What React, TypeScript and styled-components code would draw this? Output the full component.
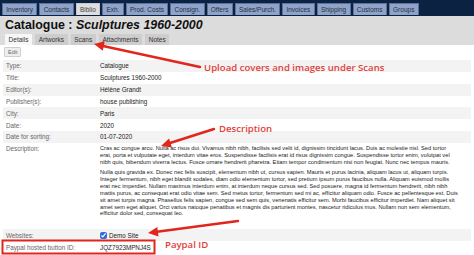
import React from "react";
import styled, { createGlobalStyle } from "styled-components";

const GlobalStyle = createGlobalStyle`
  html, body { margin: 0; padding: 0; background: #ffffff; }
  body { font-family: "Liberation Sans", Arial, Helvetica, sans-serif; }
  * { box-sizing: border-box; }
`;

const Page = styled.div`
  position: relative;
  width: 474px;
  height: 255px;
  overflow: hidden;
  background: #ffffff;
`;

const NavBar = styled.nav`
  display: flex;
  gap: 2px;
  height: 16px;
  padding: 3px 0 1px 2px;
  background: #0b2243;
`;

const NavTab = styled.div<{ $active?: boolean }>`
  display: flex;
  align-items: center;
  padding: 0 3.3px;
  font-size: 6.5px;
  color: ${(p) => (p.$active ? "#444" : "#2a2f3c")};
  background: ${(p) => (p.$active ? "#dedede" : "#8ea3ca")};
  border: 1px solid ${(p) => (p.$active ? "#c8c8c8" : "#5d719a")};
  border-bottom: none;
  white-space: nowrap;
`;

const Header = styled.header`
  display: flex;
  flex-direction: column;
  height: 29px;
  background: #dcdcdc;
  padding: 2px 0 0 5px;
`;

const Title = styled.h1`
  margin: 0;
  font-size: 12.4px;
  line-height: 14px;
  font-weight: bold;
  color: #111;
  em { font-style: italic; }
`;

const SubTabs = styled.div`
  display: flex;
  gap: 3px;
  margin-top: auto;
`;

const SubTab = styled.div<{ $active?: boolean }>`
  height: 11px;
  display: flex;
  align-items: center;
  padding: 0 3.6px;
  font-size: 6.5px;
  color: #333;
  background: ${(p) => (p.$active ? "#f7f7f7" : "#cdcdcd")};
`;

const Content = styled.main`
  padding: 2px 3px 0 3px;
`;

const EditButton = styled.button`
  display: block;
  height: 10px;
  margin: 0 0 0 1px;
  padding: 0 3px;
  font-family: inherit;
  font-size: 5.5px;
  color: #666;
  background: #efefef;
  border: 1px solid #cfcfcf;
  border-radius: 1px;
`;

const Table = styled.div`
  margin-top: 3px;
  display: flex;
  flex-direction: column;
`;

const Row = styled.div<{ $striped?: boolean; $tall?: boolean }>`
  display: grid;
  grid-template-columns: 97px 1fr;
  min-height: 11.85px;
  align-items: ${(p) => (p.$tall ? "start" : "center")};
  background: ${(p) => (p.$striped ? "#f3f3f3" : "#ffffff")};
  padding: ${(p) => (p.$tall ? "2px 0 12px 0" : "0")};
`;

const Label = styled.div`
  padding-left: 3px;
  font-size: 6.3px;
  color: #666;
  white-space: nowrap;
`;

const Value = styled.div`
  font-size: 6.3px;
  color: #222;
  display: flex;
  align-items: center;
  gap: 2px;
  white-space: nowrap;
`;

const Desc = styled.div`
  display: flex;
  flex-direction: column;
  gap: 3px;
`;

const Para = styled.p`
  margin: 0;
  font-size: 5.7px;
  line-height: 6.95px;
  color: #222;
  white-space: nowrap;
`;

const Check = styled.input`
  width: 7px;
  height: 7px;
  margin: 0;
  accent-color: #2c6fdc;
`;

const Overlay = styled.svg`
  position: absolute;
  left: 0;
  top: 0;
  pointer-events: none;
`;

const Note = styled.div<{ $x: number; $y: number }>`
  position: absolute;
  left: ${(p) => p.$x}px;
  top: ${(p) => p.$y}px;
  font-family: "Open Sans", "Liberation Sans", sans-serif;
  font-weight: 600;
  font-size: 9.6px;
  line-height: 12px;
  color: #e2413a;
  white-space: nowrap;
`;

const navTabs = [
  "Inventory",
  "Contacts",
  "Biblio",
  "Exh.",
  "Prod. Costs",
  "Consign.",
  "Offers",
  "Sales/Purch.",
  "Invoices",
  "Shipping",
  "Customs",
  "Groups",
];

const subTabs = ["Details", "Artworks", "Scans", "Attachments", "Notes"];

const fields: [string, string][] = [
  ["Type:", "Catalogue"],
  ["Title:", "Sculptures 1960-2000"],
  ["Editor(s):", "Hélène Grandt"],
  ["Publisher(s):", "house publishing"],
  ["City:", "Paris"],
  ["Date:", "2020"],
  ["Date for sorting:", "01-07-2020"],
];

const p1 = [
  "Cras ac congue arcu. Nulla ac risus dui. Vivamus nibh nibh, facilisis sed velit id, dignissim tincidunt lacus. Duis ac molestie nisl. Sed tortor",
  "erat, porta et vulputate eget, interdum vitae eros. Suspendisse facilisis erat id risus dignissim congue. Suspendisse tortor enim, volutpat vel",
  "nibh quis, bibendum viverra lectus. Fusce ornare hendrerit pharetra. Etiam tempor condimentum nisi non feugiat. Nunc nec tempus mauris.",
];

const p2 = [
  "Nulla quis gravida ex. Donec nec felis suscipit, elementum nibh ut, cursus sapien. Mauris et purus lacinia, aliquam lacus ut, aliquam turpis.",
  "Integer fermentum, nibh eget blandit sodales, diam odio elementum tortor, sed pretium ipsum purus faucibus nulla. Aliquam euismod mollis",
  "erat nec imperdiet. Nullam maximus interdum enim, at interdum neque cursus sed. Sed posuere, magna id fermentum hendrerit, nibh nibh",
  "mattis purus, ac consequat erat odio vitae sem. Sed metus tortor, fermentum sed mi ac, efficitur aliquam odio. Fusce ac pellentesque est. Duis",
  "sit amet turpis magna. Phasellus felis sapien, congue sed sem quis, venenatis efficitur sem. Morbi faucibus efficitur imperdiet. Nam aliquet sit",
  "amet sem eget aliquet. Orci varius natoque penatibus et magnis dis parturient montes, nascetur ridiculus mus. Nullam non sem elementum,",
  "efficitur dolor sed, consequat leo.",
];

const lines = (arr: string[]) =>
  arr.map((l, i) => (
    <React.Fragment key={i}>
      {l}
      {i < arr.length - 1 && <br />}
    </React.Fragment>
  ));

export default function App() {
  return (
    <>
      <GlobalStyle />
      <Page>
        <NavBar>
          {navTabs.map((t) => (
            <NavTab key={t} $active={t === "Biblio"}>
              {t}
            </NavTab>
          ))}
        </NavBar>
        <Header>
          <Title>
            Catalogue : <em>Sculptures 1960-2000</em>
          </Title>
          <SubTabs>
            {subTabs.map((t) => (
              <SubTab key={t} $active={t === "Details"}>
                {t}
              </SubTab>
            ))}
          </SubTabs>
        </Header>
        <Content>
          <EditButton>Edit</EditButton>
          <Table>
            {fields.map(([l, v], i) => (
              <Row key={l} $striped={i % 2 === 0}>
                <Label>{l}</Label>
                <Value>{v}</Value>
              </Row>
            ))}
            <Row $tall>
              <Label>Description:</Label>
              <Desc>
                <Para>{lines(p1)}</Para>
                <Para>{lines(p2)}</Para>
              </Desc>
            </Row>
            <Row $striped>
              <Label>Websites:</Label>
              <Value>
                <Check type="checkbox" checked readOnly />
                Demo Site
              </Value>
            </Row>
            <Row>
              <Label>Paypal hosted button ID:</Label>
              <Value>JQZ7923MPNJ4S</Value>
            </Row>
          </Table>
        </Content>

        <Overlay width="474" height="255" viewBox="0 0 474 255">
          <g stroke="#e0261d" strokeWidth="2.4" strokeLinecap="round" fill="none">
            <line x1="200" y1="67" x2="103" y2="46" />
            <line x1="214" y1="129" x2="170" y2="143" />
            <line x1="238" y1="221" x2="157" y2="231.7" />
          </g>
          <g fill="#e0261d">
            <polygon points="94,44 104.7,41.2 102.8,50.8" />
            <polygon points="161,146 171.9,147.5 169.1,138.4" />
            <polygon points="148,233 158.5,236.5 157.3,226.9" />
          </g>
          <rect x="2.5" y="240.5" width="152" height="13" fill="none" stroke="#e0261d" strokeWidth="2" />
        </Overlay>
        <Note $x={204} $y={62}>Upload covers and images under Scans</Note>
        <Note $x={219} $y={123}>Description</Note>
        <Note $x={165} $y={239}>Paypal ID</Note>
      </Page>
    </>
  );
}
